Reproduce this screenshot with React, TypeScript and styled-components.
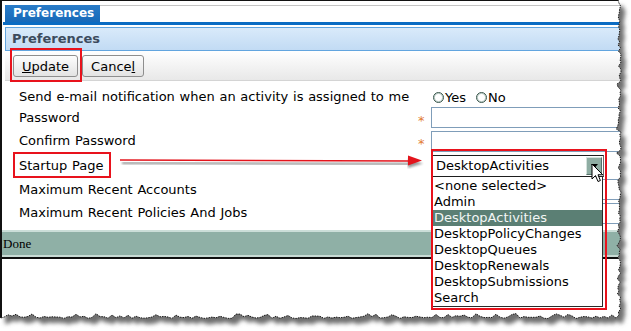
import React from 'react'
import styled, { createGlobalStyle } from 'styled-components'

const GlobalStyle = createGlobalStyle`
  body {
    margin: 0;
    background: #fff;
  }
  * {
    box-sizing: border-box;
  }
`

const Frame = styled.div`
  position: relative;
  width: 631px;
  height: 331px;
  overflow: hidden;
  background: #fff;
  font-family: 'DejaVu Sans', Verdana, sans-serif;
  font-size: 13px;
  color: #000;
`

const Paper = styled.div`
  height: 100%;
  border-left: 2px solid #111;
  border-top: 1px solid #111;
`

const TabStrip = styled.div`
  display: flex;
  height: 21px;
  padding-top: 4px;
  margin-left: 3px;
`

const Tab = styled.div`
  width: 95px;
  background: linear-gradient(#2a7cc8, #1769b9);
  color: #fff;
  font-weight: bold;
  font-size: 12px;
  line-height: 17px;
  padding-left: 8px;
`

const TabFiller = styled.div`
  flex: 1;
  border-top: 1px solid #c4c4c4;
`

const BlueRule = styled.div`
  height: 3px;
  margin-left: 1px;
  background: #0b6cc3;
`

const PanelHeader = styled.div`
  margin: 2px 0 0 3px;
  height: 24px;
  border: 1px solid #62a5df;
  border-right: none;
  background: linear-gradient(#d9eafa, #c2dbf4);
  color: #3c4b5d;
  font-weight: bold;
  line-height: 22px;
  padding-left: 6px;
`

const Toolbar = styled.div`
  display: flex;
  align-items: flex-start;
  gap: 4px;
  margin-left: 3px;
  height: 30px;
  padding: 4px 0 0 8px;
  background: linear-gradient(#ffffff, #e8e8e8);
  border-bottom: 1px solid #d4d4d4;
`

const Button = styled.button`
  display: block;
  height: 22px;
  padding: 0 8px;
  font-family: 'DejaVu Sans', Verdana, sans-serif;
  font-size: 13px;
  color: #000;
  border: 1px solid #8e8e8e;
  border-radius: 3px;
  background: linear-gradient(#fdfdfd, #e3e3e3);

  u {
    text-decoration: underline;
  }
`

const Callout = styled.span<{ $t: number; $r: number; $b: number; $l: number }>`
  position: relative;
  display: inline-flex;

  &::after {
    content: '';
    position: absolute;
    top: ${(p) => p.$t}px;
    right: ${(p) => p.$r}px;
    bottom: ${(p) => p.$b}px;
    left: ${(p) => p.$l}px;
    border: 2px solid #e8121c;
    pointer-events: none;
  }
`

const FormArea = styled.div`
  padding: 6px 0 0 17px;
`

const Row = styled.div<{ $h: number }>`
  display: grid;
  grid-template-columns: 396px 16px 1fr;
  align-items: center;
  height: ${(p) => p.$h}px;
`

const Label = styled.span`
  line-height: 16px;
  white-space: nowrap;
  word-spacing: 0.6px;
`

const Star = styled.span`
  color: #e27b30;
  padding: 5px 0 0 3px;
  line-height: 13px;
`

const Input = styled.div`
  width: 260px;
  height: 21px;
  border: 1px solid #7f9db9;
  background: #fff;
`

const Radios = styled.div`
  display: flex;
  align-items: center;
  padding-left: 2px;
`

const RadioOption = styled.label`
  display: flex;
  align-items: center;
  gap: 1px;
  margin-right: 10px;
`

const RadioDot = styled.span`
  width: 11px;
  height: 11px;
  border-radius: 50%;
  border: 1px solid #39554b;
  box-shadow: inset 0 0 0 1px #b9cbc5;
  background: #fff;
`

const SelectWrap = styled.div`
  position: relative;
  width: 172px;
  height: 22px;
  margin-left: 1px;
`

const SelectBox = styled.div`
  display: flex;
  height: 22px;
  border: 1px solid #1e1e1e;
  border-right-color: #6a6a6a;
  background: #fff;
`

const SelectValue = styled.span`
  flex: 1;
  padding-left: 3px;
  line-height: 20px;
`

const SelectButton = styled.span`
  width: 16px;
  margin: 1px;
  display: flex;
  align-items: center;
  justify-content: center;
  background: #8fada3;
  border: 1px solid #d4e2dd;
  border-right-color: #55716a;
  border-bottom-color: #55716a;
`

const OptionList = styled.div`
  position: absolute;
  z-index: 2;
  top: 22px;
  left: 0;
  width: 171px;
  padding-top: 1px;
  background: #fff;
  border: 1px solid #2a2a2a;
  border-top: none;
  border-left-color: #8a8a8a;
`

const Option = styled.div<{ $active?: boolean }>`
  height: 16px;
  line-height: 16px;
  padding-left: 1px;
  white-space: nowrap;
  background: ${(p) => (p.$active ? '#5b7f74' : 'transparent')};
  color: ${(p) => (p.$active ? '#f2f6f4' : '#000')};
`

const DropdownBox = styled.div`
  position: absolute;
  z-index: 3;
  top: -6px;
  left: -1px;
  width: 176px;
  height: 161px;
  border: 2px solid #e8121c;
  pointer-events: none;
`

const Cursor = styled.svg`
  position: absolute;
  z-index: 4;
  left: 159px;
  top: 8px;
`

const ArrowNote = styled.svg`
  position: absolute;
  left: 118px;
  top: 153px;
`

const StatusBar = styled.div`
  margin-top: 5px;
  height: 29px;
  background: #8fb0a6;
  border-top: 2px solid #cbded8;
  border-bottom: 2px solid #0e0e0e;
  box-shadow: inset 0 -2px 0 #c8dad4;
  font-family: 'Liberation Serif', 'Times New Roman', serif;
  font-size: 13px;
  line-height: 24px;
  padding-left: 1px;
`

const Torn = styled.svg`
  position: absolute;
  left: 0;
  top: 0;
  pointer-events: none;
  z-index: 10;
`

const pages = [
  '<none selected>',
  'Admin',
  'DesktopActivities',
  'DesktopPolicyChanges',
  'DesktopQueues',
  'DesktopRenewals',
  'DesktopSubmissions',
  'Search',
]

const rng = (seed: number) => () => {
  seed = (seed * 16807) % 2147483647
  return seed / 2147483647
}

const tornEdge = () => {
  const r = rng(11)
  const pts: string[] = []
  for (let y = 0; y <= 316; y += 3) {
    const x = 618 + r() * 3 - (r() > 0.85 ? 2 : 0)
    pts.push(`${x.toFixed(1)},${y}`)
  }
  for (let x = 616; x >= 0; x -= 4) {
    const y = 316 + r() * 2.5 - (r() > 0.8 ? 2.5 : 0)
    pts.push(`${x},${y.toFixed(1)}`)
  }
  const edge = 'M' + pts.join(' L')
  const paper = 'M0,0 L' + pts.join(' L') + ' Z'
  return { edge, paper }
}

const TornEdge = () => {
  const { edge, paper } = tornEdge()
  const outside = 'M0,0 H631 V331 H0 Z ' + paper
  return (
    <Torn width={631} height={331} viewBox="0 0 631 331">
      <defs>
        <clipPath id="outside">
          <path d={outside} clipRule="evenodd" />
        </clipPath>
        <filter id="soft" x="-5%" y="-5%" width="110%" height="110%">
          <feGaussianBlur stdDeviation="2" />
        </filter>
      </defs>
      <path d={outside} fill="#fff" fillRule="evenodd" />
      <g clipPath="url(#outside)">
        <path d={paper} transform="translate(5 6)" fill="#6f6f6f" filter="url(#soft)" />
      </g>
      <path d={edge} fill="none" stroke="#1a1a1a" strokeWidth="1" strokeDasharray="1.5 1" />
    </Torn>
  )
}

const App = () => {
  return (
    <>
      <GlobalStyle />
      <Frame>
        <Paper>
          <TabStrip>
            <Tab>Preferences</Tab>
            <TabFiller />
          </TabStrip>
          <BlueRule />
          <PanelHeader>Preferences</PanelHeader>
          <Toolbar>
            <Callout $t={-7} $r={-4} $b={-5} $l={-3}>
              <Button>
                <u>U</u>pdate
              </Button>
            </Callout>
            <Button>
              Cance<u>l</u>
            </Button>
          </Toolbar>

          <FormArea>
            <Row $h={20}>
              <Label>Send e-mail notification when an activity is assigned to me</Label>
              <span />
              <Radios>
                <RadioOption>
                  <RadioDot />
                  Yes
                </RadioOption>
                <RadioOption>
                  <RadioDot />
                  No
                </RadioOption>
              </Radios>
            </Row>
            <Row $h={21}>
              <Label>Password</Label>
              <Star>*</Star>
              <Input />
            </Row>
            <Row $h={26}>
              <Label>Confirm Password</Label>
              <Star>*</Star>
              <Input />
            </Row>
            <Row $h={24}>
              <Label>
                <Callout $t={-6} $r={-8} $b={-4} $l={-6}>
                  Startup Page
                </Callout>
              </Label>
              <span />
              <SelectWrap>
                <SelectBox>
                  <SelectValue>DesktopActivities</SelectValue>
                  <SelectButton>
                    <svg width="7" height="4" viewBox="0 0 7 4">
                      <path d="M0 0 H7 L3.5 4 Z" fill="#000" />
                    </svg>
                  </SelectButton>
                </SelectBox>
                <OptionList>
                  {pages.map((p) => (
                    <Option key={p} $active={p === 'DesktopActivities'}>
                      {p}
                    </Option>
                  ))}
                </OptionList>
                <DropdownBox />
                <Cursor width="13" height="20" viewBox="0 0 13 20">
                  <path
                    d="M1 1 L1 16 L4.5 12.6 L7 18.5 L9.4 17.5 L7 11.8 L11.8 11.8 Z"
                    fill="#fff"
                    stroke="#000"
                    strokeWidth="1"
                    strokeLinejoin="round"
                  />
                </Cursor>
              </SelectWrap>
            </Row>
            <Row $h={23}>
              <Label>Maximum Recent Accounts</Label>
              <span />
              <Input />
            </Row>
            <Row $h={24}>
              <Label>Maximum Recent Policies And Jobs</Label>
              <span />
              <Input />
            </Row>
          </FormArea>

          <StatusBar>Done</StatusBar>
        </Paper>

        <ArrowNote width="310" height="16" viewBox="0 0 310 16">
          <defs>
            <filter id="arrowShadow" x="-5%" y="-50%" width="110%" height="200%">
              <feGaussianBlur stdDeviation="1.2" />
            </filter>
          </defs>
          <line x1="4" y1="10" x2="292" y2="11" stroke="#8a8a8a" strokeWidth="2" filter="url(#arrowShadow)" />
          <path d="M290 4 L305 8.5 L290 13 Z" fill="#9a9a9a" filter="url(#arrowShadow)" transform="translate(0 2)" />
          <line x1="2" y1="7" x2="292" y2="8" stroke="#e3141c" strokeWidth="1.6" />
          <path d="M290 2.5 L304 7.5 L290 12.5 Z" fill="#e3141c" />
        </ArrowNote>

        <TornEdge />
      </Frame>
    </>
  )
}

export default App
